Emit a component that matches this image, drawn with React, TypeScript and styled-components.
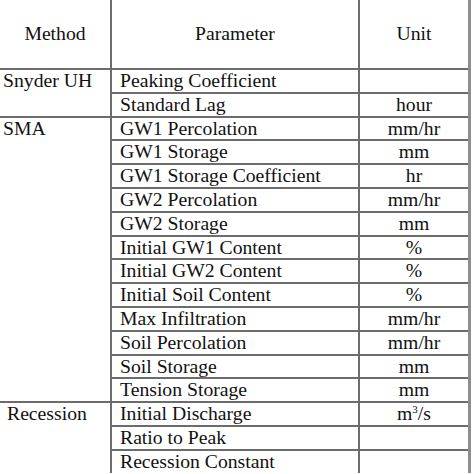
import React from "react";
import styled, { createGlobalStyle } from "styled-components";

const Global = createGlobalStyle`
  html, body { margin: 0; padding: 0; background: #fff; }
  body { font-family: "Liberation Serif", "Times New Roman", serif; color: #111; }
`;

const ROW = 21.8;
const HEAD = 68;

const Table = styled.div`
  display: inline-grid;
  grid-template-columns: 110px 246px 108px;
  grid-template-rows: ${HEAD}px repeat(17, ${ROW}px);
  gap: 2px;
  background: #6c6c6c;
  border-right: 3px solid #8e8e8e;
  font-family: "Liberation Serif", "Times New Roman", serif;
  font-size: 19.7px;
  color: #111;
`;

const HeadCell = styled.div<{ $col: number }>`
  grid-column: ${(p) => p.$col};
  grid-row: 1;
  background: #fff;
  display: flex;
  align-items: center;
  justify-content: center;
  line-height: ${ROW}px;
  white-space: nowrap;
`;

const MethodCell = styled.div<{ $row: number; $span: number; $pad: number }>`
  grid-column: 1;
  grid-row: ${(p) => p.$row} / span ${(p) => p.$span};
  background: #fff;
  line-height: ${ROW}px;
  padding-left: ${(p) => p.$pad}px;
  white-space: nowrap;
`;

const ParamCell = styled.div<{ $row: number }>`
  grid-column: 2;
  grid-row: ${(p) => p.$row};
  background: #fff;
  line-height: ${ROW}px;
  padding-left: 8px;
  white-space: nowrap;
`;

const UnitCell = styled.div<{ $row: number }>`
  grid-column: 3;
  grid-row: ${(p) => p.$row};
  background: #fff;
  line-height: ${ROW}px;
  text-align: center;
  white-space: nowrap;
`;

const Sup = styled.sup`
  font-size: 11px;
  line-height: 0;
  vertical-align: 7px;
`;

type Param = { name: string; unit: React.ReactNode };
type Group = { method: string; pad: number; params: Param[] };

const groups: Group[] = [
  {
    method: "Snyder UH",
    pad: 3,
    params: [
      { name: "Peaking Coefficient", unit: "" },
      { name: "Standard Lag", unit: "hour" },
    ],
  },
  {
    method: "SMA",
    pad: 3,
    params: [
      { name: "GW1 Percolation", unit: "mm/hr" },
      { name: "GW1 Storage", unit: "mm" },
      { name: "GW1 Storage Coefficient", unit: "hr" },
      { name: "GW2 Percolation", unit: "mm/hr" },
      { name: "GW2 Storage", unit: "mm" },
      { name: "Initial GW1 Content", unit: "%" },
      { name: "Initial GW2 Content", unit: "%" },
      { name: "Initial Soil Content", unit: "%" },
      { name: "Max Infiltration", unit: "mm/hr" },
      { name: "Soil Percolation", unit: "mm/hr" },
      { name: "Soil Storage", unit: "mm" },
      { name: "Tension Storage", unit: "mm" },
    ],
  },
  {
    method: "Recession",
    pad: 7,
    params: [
      {
        name: "Initial Discharge",
        unit: (
          <>
            m<Sup>3</Sup>/s
          </>
        ),
      },
      { name: "Ratio to Peak", unit: "" },
      { name: "Recession Constant", unit: "" },
    ],
  },
];

export default function App() {
  const cells: React.ReactNode[] = [];
  let row = 2;
  groups.forEach((g) => {
    cells.push(
      <MethodCell key={g.method} $row={row} $span={g.params.length} $pad={g.pad}>
        {g.method}
      </MethodCell>
    );
    g.params.forEach((p) => {
      cells.push(
        <ParamCell key={p.name} $row={row}>
          {p.name}
        </ParamCell>
      );
      cells.push(
        <UnitCell key={p.name + "-u"} $row={row}>
          {p.unit}
        </UnitCell>
      );
      row += 1;
    });
  });

  return (
    <>
      <Global />
      <Table>
        <HeadCell $col={1}>Method</HeadCell>
        <HeadCell $col={2}>Parameter</HeadCell>
        <HeadCell $col={3}>Unit</HeadCell>
        {cells}
      </Table>
    </>
  );
}
